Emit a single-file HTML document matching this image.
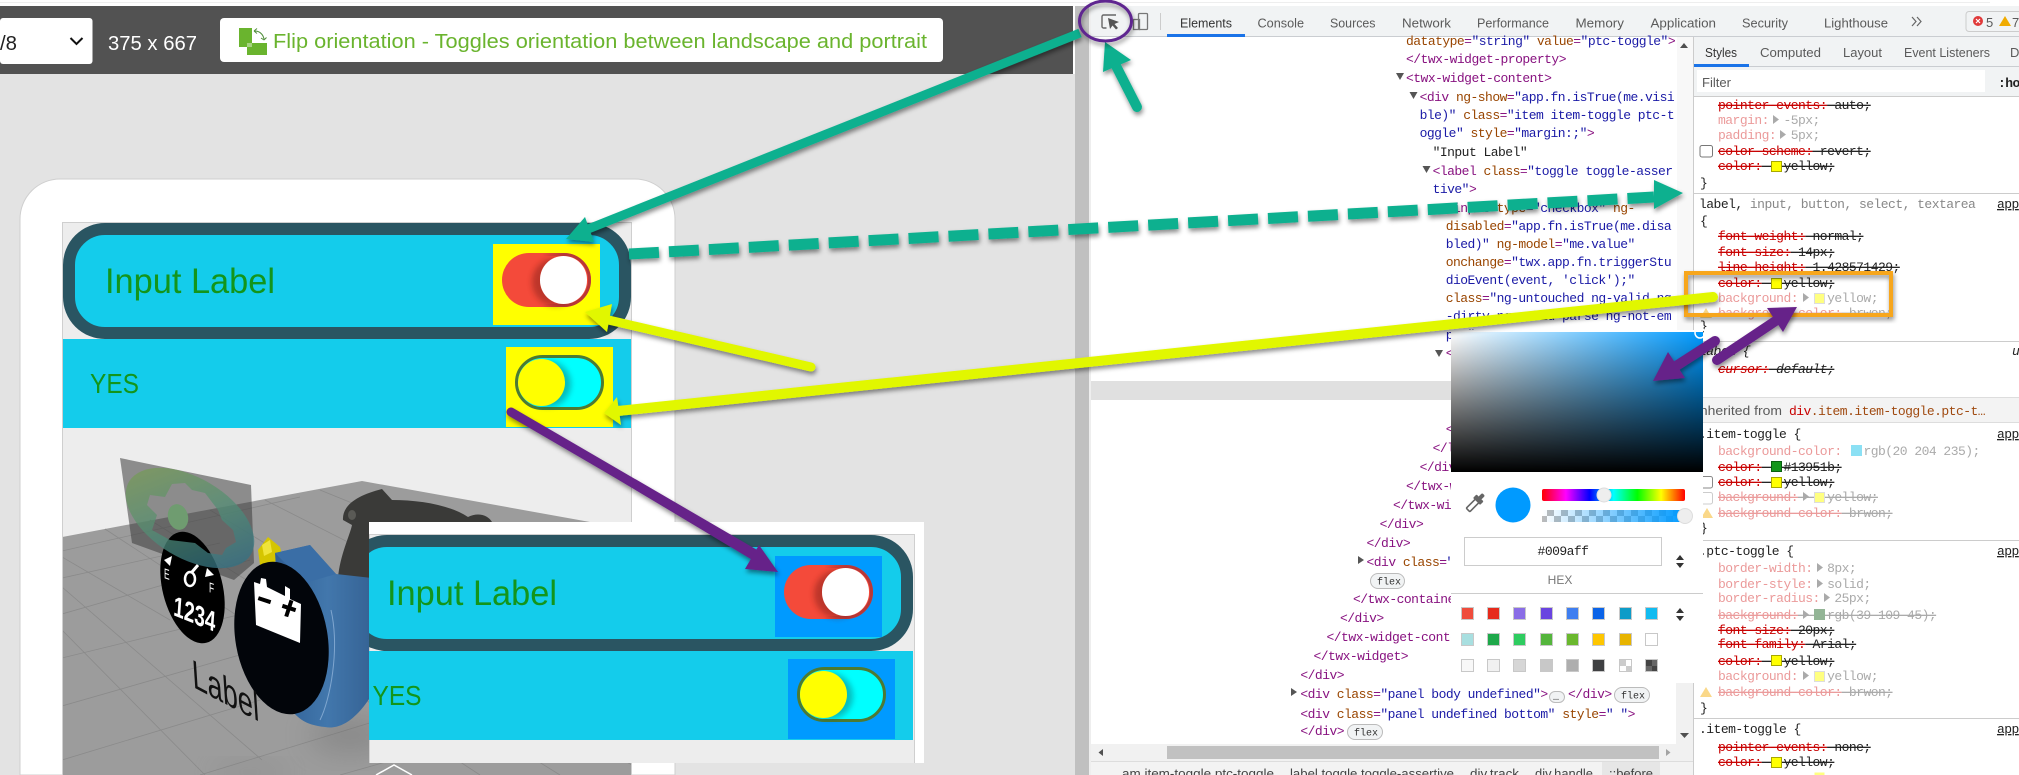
<!DOCTYPE html>
<html lang="en"><head><meta charset="utf-8"><title>DevTools toggle</title>
<style>
html,body{margin:0;padding:0;background:#fff;width:2019px;height:775px;overflow:hidden}
svg{display:block}
text{white-space:pre}
.s{font-family:"Liberation Sans",sans-serif}
.c{font-family:"Liberation Mono",monospace;font-size:13px;letter-spacing:-.53px;fill:#222}
.g{fill:#881280}.n{fill:#994500}.v{fill:#1a1aa6}
.t{font-family:"Liberation Sans",sans-serif;font-size:13px;fill:#5a5a5a}
.r{fill:#c80000;text-decoration:line-through}.k{fill:#222;text-decoration:line-through}
.f{fill:#eb9a9a}.q{fill:#aaa}
.fs{fill:#eb9a9a;text-decoration:line-through}.qs{fill:#aaa;text-decoration:line-through}
</style></head><body>
<svg width="2019" height="775" viewBox="0 0 2019 775" xmlns="http://www.w3.org/2000/svg">
<defs>
<linearGradient id="wh" x1="0" x2="1" y1="0" y2="0"><stop offset="0" stop-color="#fff"/><stop offset="1" stop-color="#fff" stop-opacity="0"/></linearGradient>
<linearGradient id="bl" x1="0" x2="0" y1="0" y2="1"><stop offset="0" stop-color="#000" stop-opacity="0"/><stop offset="1" stop-color="#000"/></linearGradient>
<linearGradient id="hue" x1="0" x2="1" y1="0" y2="0"><stop offset="0" stop-color="#f00"/><stop offset=".167" stop-color="#f0f"/><stop offset=".333" stop-color="#00f"/><stop offset=".5" stop-color="#0ff"/><stop offset=".667" stop-color="#0f0"/><stop offset=".833" stop-color="#ff0"/><stop offset="1" stop-color="#f00"/></linearGradient>
<linearGradient id="alp" x1="0" x2="1" y1="0" y2="0"><stop offset="0" stop-color="#009aff" stop-opacity="0"/><stop offset="1" stop-color="#009aff"/></linearGradient>
<pattern id="chk" width="14" height="12" patternUnits="userSpaceOnUse"><rect width="14" height="12" fill="#fff"/><rect width="7" height="6" fill="#bbb"/><rect x="7" y="6" width="7" height="6" fill="#bbb"/></pattern>
<linearGradient id="rd" x1="0" x2="1" y1="0" y2="0"><stop offset=".45" stop-color="#b83838" stop-opacity="0"/><stop offset=".7" stop-color="#b83838"/></linearGradient>
<linearGradient id="ring" gradientUnits="userSpaceOnUse" x1="130" y1="470" x2="250" y2="565"><stop offset="0" stop-color="#7f9e52"/><stop offset=".55" stop-color="#4f8c78"/><stop offset="1" stop-color="#2b6a88"/></linearGradient>
<linearGradient id="hous" x1="0" x2="1" y1="0" y2="0"><stop offset="0" stop-color="#2f5f95"/><stop offset=".5" stop-color="#4277ac"/><stop offset="1" stop-color="#335f90"/></linearGradient>
<mask id="gear" maskUnits="userSpaceOnUse" x="100" y="440" width="180" height="150">
  <rect x="100" y="440" width="180" height="150" fill="#fff"/>
  <path fill="#000" d="M150 495L165 497L172 484L185 483L192 490L205 493L218 510L222 520L233 530L236 542L226 548L222 555L208 553L195 543L170 540L152 530L157 515L147 505Z"/>
</mask>
<filter id="sh" x="-20%" y="-20%" width="140%" height="140%"><feDropShadow dx="1" dy="3" stdDeviation="2.5" flood-color="#000" flood-opacity=".45"/></filter>
<filter id="b3" x="-50%" y="-50%" width="200%" height="200%"><feGaussianBlur stdDeviation="3"/></filter>
<filter id="b14" x="-50%" y="-50%" width="200%" height="200%"><feGaussianBlur stdDeviation="14"/></filter>
<clipPath id="cFloor"><rect x="63" y="400" width="568" height="375"/></clipPath>
<clipPath id="cOv"><rect x="369" y="522" width="555" height="241"/></clipPath>
<g id="tg1">
  <rect x="502" y="253" width="89" height="54" rx="27" fill="#f44a3a"/>
  <rect x="503.500" y="254.500" width="86" height="51" rx="25.500" fill="none" stroke="url(#rd)" stroke-width="3"/>
  <rect x="532" y="258" width="47" height="48" rx="24" fill="#7a1a12" opacity=".45" filter="url(#b3)"/>
  <rect x="540" y="256" width="47" height="48" rx="23.500" fill="#fff"/>
</g>
<g id="tg2">
  <rect x="516.500" y="356.500" width="86" height="52" rx="26" fill="#0ff" stroke="#4d7a33" stroke-width="3"/>
  <rect x="524" y="361" width="47" height="46" rx="23" fill="#0a5a5a" opacity=".4" filter="url(#b3)"/>
  <rect x="518" y="359" width="47" height="47" rx="23.500" fill="#ff0"/>
</g>
</defs>

<rect width="2019" height="775" fill="#fff"/>
<rect x="0" y="2" width="1990" height="1" fill="#eee"/>

<!-- left canvas -->
<rect x="0" y="74" width="1075" height="701" fill="#e3e3e3"/>
<rect x="0" y="6" width="1073" height="68" fill="#525252"/>
<rect x="0" y="18" width="92.500" height="46" rx="3" fill="#fff"/>
<text class="s" x="0" y="50" font-size="20" fill="#222" textLength="17" lengthAdjust="spacingAndGlyphs">/8</text>
<path d="M70.500 38l6 6 6-6" fill="none" stroke="#111" stroke-width="2"/>
<text class="s" x="108" y="50" font-size="20" fill="#fff" textLength="89" lengthAdjust="spacingAndGlyphs">375 x 667</text>
<rect x="220" y="18" width="723" height="44" rx="4" fill="#fff"/>
<rect x="239" y="28" width="13" height="19" fill="#6ab42e"/>
<rect x="247" y="43" width="20" height="12" fill="#6ab42e"/>
<rect x="247" y="43" width="5" height="4" fill="#a6d381"/>
<path d="M254 31c5-.5 9 3 10 8M254 31l3-2.500M254 31l3 2.500M264 40l-3-2M264 40l2.500-2.500" fill="none" stroke="#4f8d3a" stroke-width="1"/>
<text class="s" x="273" y="48" font-size="20" fill="#6ab42e" textLength="654" lengthAdjust="spacingAndGlyphs">Flip orientation - Toggles orientation between landscape and portrait</text>

<!-- phone -->
<path d="M20 775V219a40 40 0 0 1 40-40H635a40 40 0 0 1 40 40V775Z" fill="#fff" stroke="#cfcfcf"/>
<path d="M62.500 775V222.500H631.500V775Z" fill="#ededed" stroke="#cfcfcf"/>

<!-- 3D scene -->
<g clip-path="url(#cFloor)">
  <polygon points="62,537 362,481 590,522 700,548 700,775 62,775" fill="#9c9c9c"/>
  <g stroke="#8a8a8a" stroke-width=".8" fill="none">
    <path d="M62 557L170 620M62 587L262 760M62 630L205 775M105 529L480 775M150 520L560 775M210 510L640 770M265 500L640 690M320 490L640 620"/>
    <path d="M62 551L300 497M62 578L220 543M62 614L250 560M62 658L340 590M62 706L640 540M62 760L640 585M200 775L640 640M340 775L640 690"/>
  </g>
  <ellipse cx="250" cy="772" rx="40" ry="8" fill="#777" opacity=".3" filter="url(#b14)"/>
  <ellipse cx="350" cy="735" rx="40" ry="18" fill="#666" opacity=".35" filter="url(#b14)"/>
  <polygon points="120,458 251,485 254,563 234,580 132,543" fill="#3c3c3c" opacity=".55"/>
  <ellipse cx="192.500" cy="587.500" rx="30" ry="57" fill="#000" transform="rotate(-14 192.500 587.500)"/>
  <polygon points="164,560 172,556 170,566" fill="#fff"/>
  <polygon points="207,568 214,575 205,577" fill="#fff"/>
  <text class="s" x="0" y="0" font-size="12" fill="#fff" transform="matrix(.7 .25 0 1.2 164 578)">E</text>
  <text class="s" x="0" y="0" font-size="12" fill="#fff" transform="matrix(.7 .25 0 1.2 209 592)">F</text>
  <ellipse cx="190" cy="579" rx="5" ry="7" fill="none" stroke="#fff" stroke-width="2.500"/>
  <path d="M192 572L198 565" stroke="#fff" stroke-width="3"/>
  <text class="s" x="0" y="0" font-size="20" font-weight="700" fill="#fff" transform="matrix(.94 .38 -.1 1.4 173 615)">1234</text>
  <g mask="url(#gear)" opacity=".75">
    <ellipse cx="190" cy="518" rx="71" ry="40" fill="url(#ring)" transform="rotate(31 190 518)"/>
  </g>
  <ellipse cx="178" cy="517" rx="10" ry="13" fill="#6f9c70" transform="rotate(-15 178 517)"/>
  <path d="M343 520C342 505 358 495 382 489L392 500C420 500 450 505 468 517C478 512 488 515 492 522H380V580L338 578C340 555 350 535 352 525Z" fill="#3a3a38"/>
  <ellipse cx="352" cy="515" rx="4" ry="5" fill="#5a5a56"/>
  <polygon points="258,550 268,537 280,547 282,555 270,566 260,565" fill="#d5c500"/>
  <polygon points="262,545 270,540 272,552 264,556" fill="#f0e43a"/>
  <path d="M275 553L310 545L336 574L372 578L380 680C360 720 340 730 325 727C305 725 295 718 285 700Z" fill="url(#hous)"/>
  <path d="M310 545L336 574L305 583L275 553Z" fill="#3a6ea6"/>
  <path d="M331 610C340 650 330 700 320 720" fill="none" stroke="#7fa6cf" stroke-width="1"/>
  <ellipse cx="281.500" cy="638" rx="46" ry="77" fill="#02050a" transform="rotate(-10 281.500 638)"/>
  <polygon points="254,582 260,584 261,578 266,579 267,587 285,596 285,586 290,589 290,599 301,604 300,643 256,625" fill="#fff"/>
  <rect x="258" y="598" width="13" height="4" fill="#000" transform="rotate(18 264 600)"/>
  <rect x="282" y="606" width="14" height="4" fill="#000" transform="rotate(18 289 608)"/>
  <rect x="287" y="600" width="4" height="17" fill="#000" transform="rotate(18 289 608)"/>
  <text class="s" x="0" y="0" font-size="30" fill="#111" transform="matrix(.91 .476 .09 1.35 193 687)">Label</text>
</g>

<!-- original toggle -->
<rect x="69" y="229" width="556" height="104" rx="36" fill="#14cceb" stroke="#2a5562" stroke-width="12"/>
<rect x="63" y="339" width="568" height="89" fill="#14cceb"/>
<rect x="493" y="244" width="107" height="81" fill="#ff0"/>
<rect x="506" y="347" width="107" height="80" fill="#ff0"/>
<use href="#tg1"/><use href="#tg2"/>
<text class="s" x="105" y="293" font-size="35" fill="#13951b" textLength="170" lengthAdjust="spacingAndGlyphs">Input Label</text>
<text class="s" x="90" y="393" font-size="28" fill="#13951b" textLength="49" lengthAdjust="spacingAndGlyphs">YES</text>

<!-- pasted overlay -->
<g clip-path="url(#cOv)">
  <rect x="369" y="522" width="555" height="241" fill="#fff"/>
  <rect x="369.500" y="534.500" width="545" height="240" fill="#ededed" stroke="#cfcfcf"/>
  <rect x="351" y="541" width="556" height="104" rx="36" fill="#14cceb" stroke="#2a5562" stroke-width="12"/>
  <rect x="345" y="651" width="568" height="89" fill="#14cceb"/>
  <rect x="775" y="556" width="107" height="81" fill="#009aff"/>
  <rect x="788" y="659" width="107" height="80" fill="#009aff"/>
  <use href="#tg1" transform="translate(282 312)"/><use href="#tg2" transform="translate(282 312)"/>
  <text class="s" x="387" y="605" font-size="35" fill="#13951b" textLength="170" lengthAdjust="spacingAndGlyphs">Input Label</text>
  <text class="s" x="372.500" y="705" font-size="28" fill="#13951b" textLength="49" lengthAdjust="spacingAndGlyphs">YES</text>
</g>
<path d="M376 775L394 765L412 775" fill="none" stroke="#fff" stroke-width="1.500"/>

<!-- devtools -->
<rect x="1075" y="6" width="14" height="769" fill="#c0c0c0"/>
<rect x="1089" y="6" width="2" height="769" fill="#eee"/>
<rect x="1091" y="6" width="928" height="30" fill="#f1f3f4"/>
<rect x="1091" y="36" width="928" height="1" fill="#cacdd1"/>
<path d="M1116 15h-12.500a1.500 1.500 0 0 0-1.500 1.500v10a1.500 1.500 0 0 0 1.500 1.500h3" fill="none" stroke="#666" stroke-width="1.400"/>
<polygon points="1108,18 1119,22 1114.500,24 1118,28 1116,29.500 1112.500,25.500 1110,29" fill="#555"/>
<rect x="1138.500" y="13.500" width="9" height="16" rx="1" fill="none" stroke="#777" stroke-width="1.300"/>
<rect x="1133.500" y="19.500" width="6" height="10" fill="none" stroke="#777" stroke-width="1.300"/>
<rect x="1160" y="13" width="1" height="17" fill="#ccc"/>
<rect x="1167" y="34" width="78" height="3" fill="#1a73e8"/>
<text class="t" style="fill:#333" x="1180" y="27.500" textLength="52" lengthAdjust="spacingAndGlyphs">Elements</text>
<text class="t" x="1257.500" y="27.500" textLength="46.500" lengthAdjust="spacingAndGlyphs">Console</text>
<text class="t" x="1330" y="27.500" textLength="45.500" lengthAdjust="spacingAndGlyphs">Sources</text>
<text class="t" x="1402" y="27.500" textLength="49" lengthAdjust="spacingAndGlyphs">Network</text>
<text class="t" x="1477" y="27.500" textLength="72" lengthAdjust="spacingAndGlyphs">Performance</text>
<text class="t" x="1575.500" y="27.500" textLength="48.500" lengthAdjust="spacingAndGlyphs">Memory</text>
<text class="t" x="1650.500" y="27.500" textLength="65.500" lengthAdjust="spacingAndGlyphs">Application</text>
<text class="t" x="1742" y="27.500" textLength="46" lengthAdjust="spacingAndGlyphs">Security</text>
<text class="t" x="1824" y="27.500" textLength="64" lengthAdjust="spacingAndGlyphs">Lighthouse</text>
<path d="M1912 17l4 4.500-4 4.500M1917 17l4 4.500-4 4.500" fill="none" stroke="#666" stroke-width="1.200"/>
<path d="M2019 11.500H1969a3 3 0 0 0-3 3V28.500a3 3 0 0 0 3 3H2019" fill="#f1f3f4" stroke="#ccc"/>
<circle cx="1978" cy="21" r="5" fill="#e03a3a"/>
<path d="M1976 19l4 4M1980 19l-4 4" stroke="#fff" stroke-width="1.200"/>
<text class="t" x="1986" y="27" font-size="13">5</text>
<polygon points="2005,16 2011,26 1999,26" fill="#f0ab00"/>
<text class="t" x="2012" y="27">7</text>

<!-- elements -->
<rect x="1091" y="37" width="586" height="344" fill="#fff"/>
<rect x="1677" y="37" width="16" height="707" fill="#f8f8f8"/>
<rect x="1676" y="683" width="17" height="61" fill="#f1f1f1"/>
<polygon points="1684,43 1688,48 1680,48" fill="#505050"/>
<polygon points="1680,733 1689,733 1684.500,738" fill="#505050"/>
<rect x="1091" y="381" width="586" height="19" fill="#e0e0e0"/>
<g class="code">
<text class="c" x="1406" y="45"><tspan class="n">datatype</tspan><tspan class="g">=</tspan><tspan class="v">"string"</tspan> <tspan class="n">value</tspan><tspan class="g">=</tspan><tspan class="v">"ptc-toggle"</tspan><tspan class="g">&gt;</tspan></text>
<text class="c" x="1406" y="63"><tspan class="g">&lt;/twx-widget-property&gt;</tspan></text>
<text class="c" x="1406" y="82"><tspan class="g">&lt;twx-widget-content&gt;</tspan></text>
<text class="c" x="1419.600" y="101"><tspan class="g">&lt;div</tspan> <tspan class="n">ng-show</tspan><tspan class="g">=</tspan><tspan class="v">"app.fn.isTrue(me.visi</tspan></text>
<text class="c" x="1419.600" y="119"><tspan class="v">ble)"</tspan> <tspan class="n">class</tspan><tspan class="g">=</tspan><tspan class="v">"item item-toggle ptc-t</tspan></text>
<text class="c" x="1419.600" y="137"><tspan class="v">oggle"</tspan> <tspan class="n">style</tspan><tspan class="g">=</tspan><tspan class="v">"margin:;"</tspan><tspan class="g">&gt;</tspan></text>
<text class="c" x="1432.600" y="156">"Input Label"</text>
<text class="c" x="1432.600" y="175"><tspan class="g">&lt;label</tspan> <tspan class="n">class</tspan><tspan class="g">=</tspan><tspan class="v">"toggle toggle-asser</tspan></text>
<text class="c" x="1432.600" y="193"><tspan class="v">tive"</tspan><tspan class="g">&gt;</tspan></text>
<text class="c" x="1445.700" y="212"><tspan class="g">&lt;input</tspan> <tspan class="n">type</tspan><tspan class="g">=</tspan><tspan class="v">"checkbox"</tspan> <tspan class="n">ng-</tspan></text>
<text class="c" x="1445.700" y="230"><tspan class="n">disabled</tspan><tspan class="g">=</tspan><tspan class="v">"app.fn.isTrue(me.disa</tspan></text>
<text class="c" x="1445.700" y="248"><tspan class="v">bled)"</tspan> <tspan class="n">ng-model</tspan><tspan class="g">=</tspan><tspan class="v">"me.value"</tspan></text>
<text class="c" x="1445.700" y="266"><tspan class="n">onchange</tspan><tspan class="g">=</tspan><tspan class="v">"twx.app.fn.triggerStu</tspan></text>
<text class="c" x="1445.700" y="284"><tspan class="v">dioEvent(event, 'click');"</tspan></text>
<text class="c" x="1445.700" y="302"><tspan class="n">class</tspan><tspan class="g">=</tspan><tspan class="v">"ng-untouched ng-valid ng</tspan></text>
<text class="c" x="1445.700" y="320"><tspan class="v">-dirty ng-valid-parse ng-not-em</tspan></text>
<text class="c" x="1445.700" y="339"><tspan class="v">pty"</tspan></text>
<text class="c" x="1445.700" y="357"><tspan class="g">&lt;</tspan></text>
<text class="c" x="1445.700" y="433"><tspan class="g">&lt;</tspan></text>
<text class="c" x="1432.600" y="452"><tspan class="g">&lt;/l</tspan></text>
<text class="c" x="1419.600" y="471"><tspan class="g">&lt;/div</tspan></text>
<text class="c" x="1406" y="490"><tspan class="g">&lt;/twx-w</tspan></text>
<text class="c" x="1393" y="509"><tspan class="g">&lt;/twx-wid</tspan></text>
<text class="c" x="1379.600" y="528"><tspan class="g">&lt;/div&gt;</tspan></text>
<text class="c" x="1366.500" y="547"><tspan class="g">&lt;/div&gt;</tspan></text>
<text class="c" x="1366.500" y="566"><tspan class="g">&lt;div</tspan> <tspan class="n">class</tspan><tspan class="g">=</tspan><tspan class="v">"</tspan></text>
<text class="c" x="1353" y="603"><tspan class="g">&lt;/twx-container</tspan></text>
<text class="c" x="1340" y="622"><tspan class="g">&lt;/div&gt;</tspan></text>
<text class="c" x="1326.500" y="641"><tspan class="g">&lt;/twx-widget-conte</tspan></text>
<text class="c" x="1313.500" y="660"><tspan class="g">&lt;/twx-widget&gt;</tspan></text>
<text class="c" x="1300.400" y="679"><tspan class="g">&lt;/div&gt;</tspan></text>
<text class="c" x="1300.400" y="698"><tspan class="g">&lt;div</tspan> <tspan class="n">class</tspan><tspan class="g">=</tspan><tspan class="v">"panel body undefined"</tspan><tspan class="g">&gt;</tspan></text>
<text class="c" x="1568" y="698"><tspan class="g">&lt;/div&gt;</tspan></text>
<text class="c" x="1300.400" y="718"><tspan class="g">&lt;div</tspan> <tspan class="n">class</tspan><tspan class="g">=</tspan><tspan class="v">"panel undefined bottom"</tspan> <tspan class="n">style</tspan><tspan class="g">=</tspan><tspan class="v">" "</tspan><tspan class="g">&gt;</tspan></text>
<text class="c" x="1300.400" y="735"><tspan class="g">&lt;/div&gt;</tspan></text>
</g>
<g fill="#555">
<polygon points="1396,73 1404,73 1400,80"/>
<polygon points="1409.500,92 1417.500,92 1413.500,99"/>
<polygon points="1422.500,166 1430.500,166 1426.500,173"/>
<polygon points="1435,350 1443,350 1439,357"/>
<polygon points="1358,556 1358,564 1364,560"/>
<polygon points="1291,688 1291,696 1297,692"/>
</g>
<g font-family="Liberation Mono,monospace" font-size="10" fill="#333">
<rect x="1370.500" y="573.500" width="34" height="15" rx="7.500" fill="#f1f3f4" stroke="#bbb"/><text x="1377" y="584.500">flex</text>
<rect x="1549.500" y="691.500" width="15" height="11" rx="5.500" fill="#f1f3f4" stroke="#bbb"/><text x="1553" y="700">…</text>
<rect x="1614.500" y="687.500" width="35" height="15" rx="7.500" fill="#f1f3f4" stroke="#bbb"/><text x="1621" y="698.500">flex</text>
<rect x="1347.500" y="724.500" width="35" height="15" rx="7.500" fill="#f1f3f4" stroke="#bbb"/><text x="1354" y="735.500">flex</text>
</g>
<rect x="1091" y="744" width="602" height="17" fill="#f1f1f1"/>
<rect x="1167" y="746" width="492" height="13" fill="#c1c1c1"/>
<polygon points="1103,749 1103,756 1098.500,752.500" fill="#505050"/>
<polygon points="1666,749 1666,756 1670.500,752.500" fill="#a3a3a3"/>
<rect x="1091" y="761" width="602" height="14" fill="#f3f3f3"/>
<rect x="1091" y="761" width="602" height="1" fill="#ddd"/>
<rect x="1602" y="762" width="58" height="13" fill="#e6e6e6"/>
<g class="t" font-size="13">
<text x="1122" y="778" class="t" style="fill:#444" textLength="152" lengthAdjust="spacingAndGlyphs">am.item-toggle.ptc-toggle</text>
<text x="1290" y="778" class="t" style="fill:#444" textLength="164" lengthAdjust="spacingAndGlyphs">label.toggle.toggle-assertive</text>
<text x="1470" y="778" class="t" style="fill:#444" textLength="49" lengthAdjust="spacingAndGlyphs">div.track</text>
<text x="1535" y="778" class="t" style="fill:#444" textLength="58" lengthAdjust="spacingAndGlyphs">div.handle</text>
<text x="1609" y="778" class="t" style="fill:#444" textLength="44" lengthAdjust="spacingAndGlyphs">::before</text>
</g>

<!-- styles pane -->
<rect x="1693" y="37" width="326" height="738" fill="#fff"/>
<rect x="1693" y="37" width="1" height="738" fill="#ccc"/>
<rect x="1694" y="37" width="325" height="59" fill="#f1f3f4"/>
<rect x="1694" y="66" width="325" height="1" fill="#cacdd1"/>
<rect x="1694" y="64" width="55" height="3" fill="#1a73e8"/>
<text class="t" style="fill:#333" x="1705" y="57" textLength="32" lengthAdjust="spacingAndGlyphs">Styles</text>
<text class="t" x="1760" y="57" textLength="61" lengthAdjust="spacingAndGlyphs">Computed</text>
<text class="t" x="1843" y="57" textLength="39" lengthAdjust="spacingAndGlyphs">Layout</text>
<text class="t" x="1904" y="57" textLength="86" lengthAdjust="spacingAndGlyphs">Event Listeners</text>
<text class="t" x="2010" y="57">D</text>
<rect x="1697" y="70" width="288" height="22" fill="#fff"/>
<text class="t" x="1702" y="87" textLength="29" lengthAdjust="spacingAndGlyphs">Filter</text>
<text class="c" x="1998" y="87" font-weight="700">:ho</text>
<rect x="1694" y="96" width="325" height="1" fill="#ccc"/>

<text class="c" x="1718" y="109"><tspan class="r">pointer-events:</tspan><tspan class="k"> auto;</tspan></text>
<text class="c" x="1718" y="124"><tspan class="f">margin:</tspan><tspan class="q">  -5px;</tspan></text>
<polygon points="1773,115 1773,124 1779,119.500" fill="#aaa"/>
<text class="c" x="1718" y="139"><tspan class="f">padding:</tspan><tspan class="q">  5px;</tspan></text>
<polygon points="1780,130 1780,139 1786,134.500" fill="#aaa"/>
<rect x="1700" y="145.500" width="12.500" height="11.500" rx="2" fill="#fff" stroke="#777"/>
<text class="c" x="1718" y="155"><tspan class="r">color-scheme:</tspan><tspan class="k"> revert;</tspan></text>
<text class="c" x="1718" y="170"><tspan class="r">color:</tspan><tspan class="k">   yellow;</tspan></text>
<rect x="1771.500" y="161.500" width="10" height="10" fill="#ff0" stroke="#a8a800"/>
<text class="c" x="1700" y="187">}</text>
<rect x="1694" y="193" width="325" height="1" fill="#ccc"/>
<text class="c" x="1699" y="208">label, <tspan fill="#888">input, button, select, textarea</tspan></text>
<text class="c" x="1997" y="208" text-decoration="underline">app</text>
<text class="c" x="1700" y="225">{</text>
<text class="c" x="1718" y="240"><tspan class="r">font-weight:</tspan><tspan class="k"> normal;</tspan></text>
<text class="c" x="1718" y="256"><tspan class="r">font-size:</tspan><tspan class="k"> 14px;</tspan></text>
<text class="c" x="1718" y="271"><tspan class="r">line-height:</tspan><tspan class="k"> 1.428571429;</tspan></text>
<text class="c" x="1718" y="287"><tspan class="r">color:</tspan><tspan class="k">   yellow;</tspan></text>
<rect x="1771.500" y="278.500" width="10" height="10" fill="#ff0" stroke="#a8a800"/>
<text class="c" x="1718" y="302"><tspan class="f">background:</tspan><tspan class="q">    yellow;</tspan></text>
<polygon points="1803,293 1803,302 1809,297.500" fill="#aaa"/>
<rect x="1814.500" y="293.500" width="10" height="10" fill="#ffff80" stroke="#ddd"/>
<text class="c" x="1718" y="317"><tspan class="fs">background-color:</tspan><tspan class="qs"> brwon;</tspan></text>
<polygon points="1706,308 1712,318 1700,318" fill="#fad889"/>
<text class="c" x="1700" y="330">}</text>
<rect x="1694" y="341" width="325" height="1" fill="#ccc"/>
<text class="c" x="1699" y="355" font-style="italic">label {</text>
<text class="c" x="2012" y="355" font-style="italic">u</text>
<text class="c" x="1718" y="373" font-style="italic"><tspan class="r">cursor:</tspan><tspan class="k"> default;</tspan></text>
<rect x="1694" y="397" width="325" height="25" fill="#f3f3f3"/>
<rect x="1694" y="397" width="325" height="1" fill="#ddd"/>
<rect x="1694" y="422" width="325" height="1" fill="#ddd"/>
<text class="t" x="1696" y="415" textLength="86" lengthAdjust="spacingAndGlyphs">Inherited from</text>
<text class="c" x="1789" y="415" textLength="196"><tspan fill="#c80000">div</tspan><tspan fill="#a04a10">.item.item-toggle.ptc-t…</tspan></text>
<text class="c" x="1699" y="438">.item-toggle {</text>
<text class="c" x="1997" y="438" text-decoration="underline">app</text>
<text class="c" x="1718" y="455"><tspan class="f">background-color:</tspan><tspan class="q">   rgb(20 204 235);</tspan></text>
<rect x="1851" y="445" width="11" height="11" fill="#8be0f4"/>
<text class="c" x="1718" y="471"><tspan class="r">color:</tspan><tspan class="k">   #13951b;</tspan></text>
<rect x="1771.500" y="461.500" width="10" height="10" fill="#13951b" stroke="#0a6010"/>
<rect x="1700" y="476.500" width="12.500" height="11.500" rx="2" fill="#fff" stroke="#888"/>
<text class="c" x="1718" y="486"><tspan class="r">color:</tspan><tspan class="k">   yellow;</tspan></text>
<rect x="1771.500" y="477.500" width="10" height="10" fill="#ff0" stroke="#a8a800"/>
<rect x="1700" y="492.500" width="12.500" height="11.500" rx="2" fill="#fff" stroke="#ccc"/>
<text class="c" x="1718" y="501"><tspan class="fs">background:</tspan><tspan class="qs">    yellow;</tspan></text>
<polygon points="1803,492 1803,501 1809,496.500" fill="#aaa"/>
<rect x="1814.500" y="492.500" width="10" height="10" fill="#ffff80" stroke="#ddd"/>
<text class="c" x="1718" y="517"><tspan class="fs">background-color:</tspan><tspan class="qs"> brwon;</tspan></text>
<polygon points="1707,508 1713,518 1701,518" fill="#fad889"/>
<text class="c" x="1700" y="532">}</text>
<rect x="1694" y="540" width="325" height="1" fill="#ccc"/>
<text class="c" x="1699" y="555">.ptc-toggle {</text>
<text class="c" x="1997" y="555" text-decoration="underline">app</text>
<text class="c" x="1718" y="572"><tspan class="f">border-width:</tspan><tspan class="q">  8px;</tspan></text>
<polygon points="1817,563 1817,572 1823,567.500" fill="#aaa"/>
<text class="c" x="1718" y="588"><tspan class="f">border-style:</tspan><tspan class="q">  solid;</tspan></text>
<polygon points="1817,579 1817,588 1823,583.500" fill="#aaa"/>
<text class="c" x="1718" y="602"><tspan class="f">border-radius:</tspan><tspan class="q">  25px;</tspan></text>
<polygon points="1824,593 1824,602 1830,597.500" fill="#aaa"/>
<text class="c" x="1718" y="619"><tspan class="fs">background:</tspan><tspan class="qs">    rgb(39 109 45);</tspan></text>
<polygon points="1803,610 1803,619 1809,614.500" fill="#aaa"/>
<rect x="1814" y="609" width="11" height="11" fill="#93b596"/>
<text class="c" x="1718" y="634"><tspan class="r">font-size:</tspan><tspan class="k"> 20px;</tspan></text>
<text class="c" x="1718" y="648"><tspan class="r">font-family:</tspan><tspan class="k"> Arial;</tspan></text>
<text class="c" x="1718" y="665"><tspan class="r">color:</tspan><tspan class="k">   yellow;</tspan></text>
<rect x="1771.500" y="655.500" width="10" height="10" fill="#ff0" stroke="#a8a800"/>
<text class="c" x="1718" y="680"><tspan class="f">background:</tspan><tspan class="q">    yellow;</tspan></text>
<polygon points="1803,671 1803,680 1809,675.500" fill="#aaa"/>
<rect x="1814.500" y="671.500" width="10" height="10" fill="#ffff80" stroke="#ddd"/>
<text class="c" x="1718" y="696"><tspan class="fs">background-color:</tspan><tspan class="qs"> brwon;</tspan></text>
<polygon points="1706,687 1712,697 1700,697" fill="#fad889"/>
<text class="c" x="1700" y="712">}</text>
<rect x="1694" y="718" width="325" height="1" fill="#ccc"/>
<text class="c" x="1699" y="733">.item-toggle {</text>
<text class="c" x="1997" y="733" text-decoration="underline">app</text>
<text class="c" x="1718" y="751"><tspan class="r">pointer-events:</tspan><tspan class="k"> none;</tspan></text>
<text class="c" x="1718" y="766"><tspan class="r">color:</tspan><tspan class="k">   yellow;</tspan></text>
<rect x="1771.500" y="757.500" width="10" height="10" fill="#ff0" stroke="#a8a800"/>
<rect x="1814.500" y="772.500" width="10" height="2.500" fill="#ffff80"/>

<!-- colour picker -->
<rect x="1451" y="330" width="252" height="353" fill="#fff"/>
<rect x="1451" y="332" width="252" height="140" fill="#009aff"/>
<rect x="1451" y="332" width="252" height="140" fill="url(#wh)"/>
<rect x="1451" y="332" width="252" height="140" fill="url(#bl)"/>
<circle cx="1700" cy="333" r="5" fill="none" stroke="#fff" stroke-width="1.500"/>
<g transform="rotate(45 1473 505)"><rect x="1470.500" y="497" width="5" height="15" rx="1" fill="none" stroke="#666" stroke-width="1.600"/><rect x="1468" y="495" width="10" height="5" rx="1" fill="#666"/><rect x="1471" y="490" width="4" height="6" rx="1.500" fill="#666"/></g>
<circle cx="1513" cy="505" r="17.500" fill="#009aff"/>
<rect x="1542" y="489" width="143" height="12" rx="2" fill="url(#hue)"/>
<circle cx="1604" cy="495" r="7" fill="#eee" stroke="#ddd"/>
<rect x="1542" y="510" width="143" height="12" fill="url(#chk)"/>
<rect x="1542" y="510" width="143" height="12" fill="url(#alp)"/>
<circle cx="1685" cy="516" r="7.500" fill="#eee" stroke="#ddd"/>
<rect x="1464.500" y="537.500" width="197" height="28" fill="#fff" stroke="#ccc"/>
<text class="c" x="1563" y="555" text-anchor="middle">#009aff</text>
<polygon points="1680,555 1684,560 1676,560" fill="#333"/><polygon points="1676,563 1684,563 1680,568" fill="#333"/>
<text class="s" x="1560" y="584" font-size="12" fill="#777" text-anchor="middle">HEX</text>
<rect x="1451" y="593" width="252" height="1" fill="#ccc"/>
<polygon points="1680,608 1684,613 1676,613" fill="#333"/><polygon points="1676,616 1684,616 1680,621" fill="#333"/>
<g stroke="#c8c8c8" stroke-width="1">
<rect x="1461.500" y="607.500" width="12" height="12" fill="#ef4c3c"/><rect x="1487.500" y="607.500" width="12" height="12" fill="#e62a1c"/><rect x="1513.500" y="607.500" width="12" height="12" fill="#8a6de6"/><rect x="1540.500" y="607.500" width="12" height="12" fill="#6a44e0"/><rect x="1566.500" y="607.500" width="12" height="12" fill="#3f7ef0"/><rect x="1592.500" y="607.500" width="12" height="12" fill="#0b64e8"/><rect x="1619.500" y="607.500" width="12" height="12" fill="#0e9cc8"/><rect x="1645.500" y="607.500" width="12" height="12" fill="#12bbf0"/>
<rect x="1461.500" y="633.500" width="12" height="12" fill="#a8dfe0"/><rect x="1487.500" y="633.500" width="12" height="12" fill="#1ea84a"/><rect x="1513.500" y="633.500" width="12" height="12" fill="#2ecc60"/><rect x="1540.500" y="633.500" width="12" height="12" fill="#54b53c"/><rect x="1566.500" y="633.500" width="12" height="12" fill="#6ab82e"/><rect x="1592.500" y="633.500" width="12" height="12" fill="#fec600"/><rect x="1619.500" y="633.500" width="12" height="12" fill="#e7b400"/><rect x="1645.500" y="633.500" width="12" height="12" fill="#fff"/>
<rect x="1461.500" y="659.500" width="12" height="12" fill="#f8f8f8"/><rect x="1487.500" y="659.500" width="12" height="12" fill="#f1f1f1"/><rect x="1513.500" y="659.500" width="12" height="12" fill="#d6d6d6"/><rect x="1540.500" y="659.500" width="12" height="12" fill="#c8c8c8"/><rect x="1566.500" y="659.500" width="12" height="12" fill="#aeaeae"/><rect x="1592.500" y="659.500" width="12" height="12" fill="#3f4042"/><rect x="1619.500" y="659.500" width="12" height="12" fill="#fff"/><rect x="1645.500" y="659.500" width="12" height="12" fill="#666"/>
</g>
<rect x="1620" y="660" width="6" height="6" fill="#ccc"/><rect x="1626" y="666" width="5" height="5" fill="#ccc"/>
<rect x="1646" y="660" width="6" height="6" fill="#444"/><rect x="1652" y="666" width="5" height="5" fill="#444"/>

<!-- annotation arrows -->
<g filter="url(#sh)">
  <rect x="1686" y="273" width="205" height="42" fill="none" stroke="#f7a61e" stroke-width="4"/>
</g>
<g filter="url(#sh)">
  <path d="M1080 33L578 233" stroke="#0bb08f" stroke-width="9" fill="none"/>
  <polygon points="566,239 585,217 594,242" fill="#0bb08f"/>
  <path d="M629 254L1654 197" stroke="#0bb08f" stroke-width="11" stroke-dasharray="30 10" fill="none"/>
  <polygon points="1683,193 1654,180 1654,209" fill="#0bb08f"/>
  <path d="M1137 107L1113 60" stroke="#0bb08f" stroke-width="10" stroke-linecap="round" fill="none"/>
  <polygon points="1105,42 1103,72 1131,60" fill="#0bb08f"/>
</g>
<g filter="url(#sh)">
  <path d="M811 367L600 318" stroke="#e1f700" stroke-width="9" stroke-linecap="round" fill="none"/>
  <polygon points="585,312 612,304 607,332" fill="#e1f700"/>
  <path d="M1713 297L618 411" stroke="#e1f700" stroke-width="10" stroke-linecap="round" fill="none"/>
  <polygon points="604,413 617,397 621,425" fill="#e1f700"/>
</g>
<g filter="url(#sh)">
  <path d="M511 412L762 558" stroke="#662189" stroke-width="9" stroke-linecap="round" fill="none"/>
  <path d="M511 412L765 564" stroke="#662189" stroke-width="6" fill="none"/>
  <polygon points="778,572 759,545 745,569" fill="#662189"/>
  <path d="M1715 341L1673 368" stroke="#662189" stroke-width="10" stroke-linecap="round" fill="none"/>
  <polygon points="1653,381 1668,352 1685,378" fill="#662189"/>
  <path d="M1717 360L1777 320" stroke="#662189" stroke-width="10" stroke-linecap="round" fill="none"/>
  <polygon points="1797,307 1767,308 1783,332" fill="#662189"/>
</g>
<g filter="url(#sh)"><ellipse cx="1105.500" cy="21" rx="26" ry="20" fill="none" stroke="#5f2590" stroke-width="3"/></g>
</svg>
</body></html>
